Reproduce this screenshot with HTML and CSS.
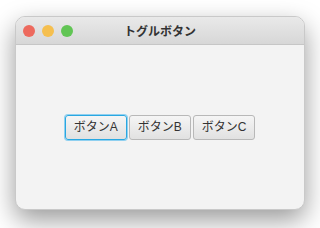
FILE: index.html
```
<!DOCTYPE html>
<html lang="ja">
<head>
<meta charset="UTF-8" />
<meta name="viewport" content="width=device-width, initial-scale=1" />
<title>トグルボタン</title>
<link rel="stylesheet" href="styles.css">
</head>
<body>
  <div class="window">
    <div class="titlebar">
      <div class="lights">
        <span class="light red"></span>
        <span class="light yellow"></span>
        <span class="light green"></span>
      </div>
      <div class="title">トグルボタン</div>
    </div>
    <div class="content">
      <div class="group">
        <button type="button" class="toggle focused">ボタンA</button>
        <button type="button" class="toggle">ボタンB</button>
        <button type="button" class="toggle">ボタンC</button>
      </div>
    </div>
  </div>
</body>
</html>
```

FILE: styles.css
```
* {
  box-sizing: border-box;
}

body {
  margin: 0;
  padding: 16px 15px 18px;
  background-color: #ffffff;
  font-family: "Noto Sans CJK JP", "Noto Sans", sans-serif;
}

.window {
  width: 290px;
  height: 194px;
  border: 1px solid #c9c9c9;
  border-radius: 10px;
  background-color: #f3f3f3;
  box-shadow: 0 10px 26px rgba(0,0,0,0.4);
  overflow: hidden;
  display: flex;
  flex-direction: column;
}

.titlebar {
  position: relative;
  height: 28px;
  background: linear-gradient(#e9e9e9, #d7d7d7);
  border-bottom: 1px solid #c6c6c6;
  display: flex;
  align-items: center;
}

.lights {
  display: flex;
  gap: 7px;
  padding-left: 7px;
}

.light {
  width: 12px;
  height: 12px;
  border-radius: 50%;
}

.red { background-color: #ed6a5e; }
.yellow { background-color: #f5bf4f; }
.green { background-color: #61c554; }

.title {
  position: absolute;
  left: 0;
  right: 0;
  text-align: center;
  font-size: 12px;
  font-weight: bold;
  color: #333333;
}

.content {
  flex: 1;
  display: flex;
  align-items: center;
  justify-content: center;
}

.group {
  display: flex;
  gap: 2px;
}

.toggle {
  height: 25px;
  padding: 0 8px;
  border: 1px solid #b8b8b8;
  border-radius: 3px;
  background: linear-gradient(#f5f5f5, #e1e1e1);
  color: #333333;
  font-family: "Liberation Sans", "Noto Sans CJK JP", sans-serif;
  font-size: 12px;
  line-height: 23px;
}

.toggle.focused {
  border-color: #29a7e1;
  box-shadow: 0 0 0 1px #8fd0f0;
}
```
